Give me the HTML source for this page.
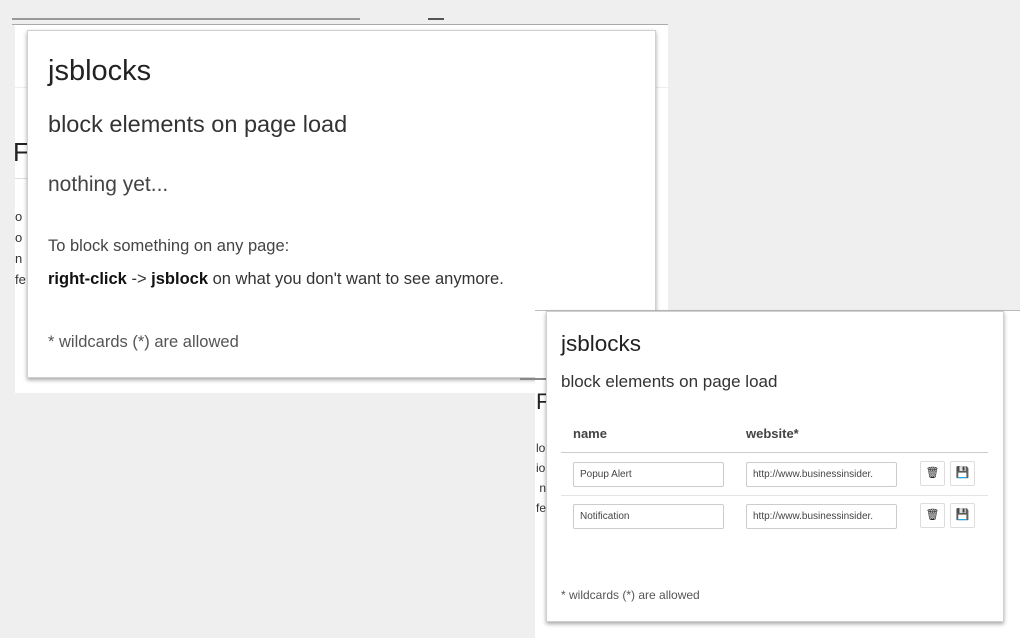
<!DOCTYPE html>
<html><head><meta charset="utf-8"><style>
*{margin:0;padding:0;box-sizing:border-box}
body{width:1020px;height:638px;background:#efefef;position:relative;overflow:hidden;font-family:"Liberation Sans",sans-serif;color:#333}
.a{position:absolute}
.pop{position:absolute;background:#fff;border:1px solid #d0d0d0;box-shadow:0 2px 4px rgba(0,0,0,.35)}
.t{position:absolute;white-space:nowrap}
.inp{position:absolute;height:25px;border:1px solid #ccc;border-radius:2px;font-size:10px;color:#444;padding:6px 6px;white-space:nowrap;overflow:hidden}
.btn{position:absolute;width:25px;height:25px;border:1px solid #ddd;border-radius:2px;font-size:11px;text-align:center;line-height:23px;color:#222}
</style></head><body>
<div class="a" style="left:15px;top:25px;width:653px;height:368px;background:#fff"></div>
<div class="a" style="left:12px;top:18px;width:348px;height:2px;background:#999"></div>
<div class="a" style="left:428px;top:18px;width:16px;height:2px;background:#555"></div>
<div class="a" style="left:12px;top:24px;width:656px;height:1px;background:#aaa"></div>
<div class="a" style="left:15px;top:87px;width:653px;height:1px;background:#eee"></div>
<div class="t" style="left:13px;top:137px;font-size:26px;color:#222">F</div>
<div class="a" style="left:15px;top:178px;width:20px;height:1px;background:#ddd"></div>
<div class="t" style="left:15px;top:206px;font-size:13px;line-height:21px">o<br>o<br>n<br>fe</div>
<div class="pop" style="left:27px;top:30px;width:629px;height:348px">
<div class="t" style="left:20px;top:24px;font-size:29px;color:#222">jsblocks</div>
<div class="t" style="left:20px;top:80px;font-size:23.5px;color:#333">block elements on page load</div>
<div class="t" style="left:20px;top:142px;font-size:21px;color:#444">nothing yet...</div>
<div class="t" style="left:20px;top:206px;font-size:16.5px;color:#444">To block something on any page:</div>
<div class="t" style="left:20px;top:239px;font-size:16.5px;color:#333"><b style="color:#111">right-click</b> -&gt; <b style="color:#111">jsblock</b> on what you don't want to see anymore.</div>
<div class="t" style="left:20px;top:302px;font-size:16.5px;color:#555">* wildcards (*) are allowed</div>
</div>
<div class="a" style="left:535px;top:310px;width:485px;height:328px;background:#fff"></div>
<div class="a" style="left:535px;top:310px;width:485px;height:1px;background:#bbb"></div>
<div class="a" style="left:520px;top:378px;width:26px;height:2px;background:#888"></div>
<div class="t" style="left:536px;top:389px;font-size:22px;color:#222">F</div>
<div class="t" style="left:536px;top:438px;font-size:12px;line-height:20px">lo<br>io<br>&nbsp;n<br>fe</div>
<div class="pop" style="left:546px;top:311px;width:458px;height:311px">
<div class="t" style="left:14px;top:19px;font-size:22.5px;color:#222">jsblocks</div>
<div class="t" style="left:14px;top:60px;font-size:17px;color:#333">block elements on page load</div>
<div class="t" style="left:26px;top:114px;font-size:13px;font-weight:bold;color:#444">name</div>
<div class="t" style="left:199px;top:114px;font-size:13px;font-weight:bold;color:#444">website*</div>
<div class="a" style="left:14px;top:140px;width:427px;height:1px;background:#ccc"></div>
<div class="a" style="left:14px;top:183px;width:427px;height:1px;background:#e4e4e4"></div>
<div class="inp" style="left:26px;top:150px;width:151px">Popup Alert</div>
<div class="inp" style="left:199px;top:150px;width:151px">http://www.businessinsider.</div>
<div class="btn" style="left:373px;top:149px">&#128465;</div>
<div class="btn" style="left:403px;top:149px">&#128190;</div>
<div class="inp" style="left:26px;top:192px;width:151px">Notification</div>
<div class="inp" style="left:199px;top:192px;width:151px">http://www.businessinsider.</div>
<div class="btn" style="left:373px;top:191px">&#128465;</div>
<div class="btn" style="left:403px;top:191px">&#128190;</div>
<div class="t" style="left:14px;top:276px;font-size:12px;color:#555">* wildcards (*) are allowed</div>
</div>
</body></html>
